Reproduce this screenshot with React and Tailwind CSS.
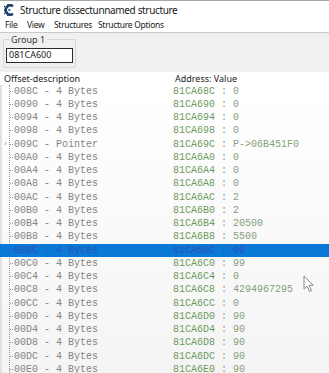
import React from "react";

const rows = [
	["008C", "4 Bytes", "0"],
	["0090", "4 Bytes", "0"],
	["0094", "4 Bytes", "0"],
	["0098", "4 Bytes", "0"],
	["009C", "Pointer", "P->06B451F0"],
	["00A0", "4 Bytes", "0"],
	["00A4", "4 Bytes", "0"],
	["00A8", "4 Bytes", "0"],
	["00AC", "4 Bytes", "2"],
	["00B0", "4 Bytes", "2"],
	["00B4", "4 Bytes", "20500"],
	["00B8", "4 Bytes", "5500"],
	["00BC", "4 Bytes", "99"],
	["00C0", "4 Bytes", "99"],
	["00C4", "4 Bytes", "0"],
	["00C8", "4 Bytes", "4294967295"],
	["00CC", "4 Bytes", "0"],
	["00D0", "4 Bytes", "90"],
	["00D4", "4 Bytes", "90"],
	["00D8", "4 Bytes", "90"],
	["00DC", "4 Bytes", "90"],
	["00E0", "4 Bytes", "90"],
];

const addr = (off) => "81CA6" + off.slice(2);

const CeIcon = () => (
	<svg width="11" height="12" viewBox="0 0 11 12">
		<path
			d="M9 2.2 A4.6 4.6 0 1 0 9 9.8"
			fill="none"
			stroke="#1d3b6e"
			strokeWidth="2.6"
		/>
		<path d="M1 3 L0 2 M0.5 6 L-0.5 6 M1 9 L0 10 M4 1 L3.6 0 M4 11 L3.6 12" stroke="#1d3b6e" strokeWidth="1.4" />
		<circle cx="5.3" cy="6" r="1.2" fill="#4a7bc2" />
	</svg>
);

const Cursor = () => (
	<svg width="12" height="18" viewBox="0 0 12 18">
		<path
			d="M1 1 L1 14 L4 11 L6.5 16.5 L8.5 15.6 L6 10.3 L10.2 10.3 Z"
			fill="#ffffff"
			stroke="#8a8a8a"
			strokeWidth="1"
			strokeLinejoin="round"
		/>
	</svg>
);

export default function App() {
	return (
		<div className="relative w-[329px] h-[373px] overflow-hidden bg-white font-['Noto_Sans',sans-serif] text-[#1a1a1a]">
			{/* title */}
			<div className="h-[19px] flex items-center gap-[5px] pl-[4px] border-t border-[#a8a8a8]">
				<CeIcon />
				<span className="text-[10px] tracking-[-0.35px]">Structure dissectunnamed structure</span>
			</div>
			{/* menu */}
			<div className="h-[14px] flex items-center text-[8.5px] tracking-[-0.3px] pl-[5px] border-b border-[#c9c9c9]">
				<span className="w-[22px]">File</span>
				<span className="w-[27px]">View</span>
				<span className="w-[44px]">Structures</span>
				<span>Structure Options</span>
			</div>
			{/* group */}
			<div className="h-[39px] bg-[#f0f0f0] pt-[1px]">
				<fieldset className="ml-[3px] w-[73px] h-[34px] border border-[#d6d6d6] rounded-[2px] px-[2px]">
					<legend className="ml-[3px] px-[2px] text-[9px] text-[#333] leading-[11px]">Group 1</legend>
					<div className="mt-[3px] w-[67px] h-[15px] border-[1.5px] border-[#2a2a2a] bg-white text-[9px] leading-[12px] pl-[2px]">
						081CA600
					</div>
				</fieldset>
			</div>
			{/* header */}
			<div className="h-[12.5px] flex items-center text-[9px] leading-[11px]">
				<span className="w-[175px] pl-[4px]">Offset-description</span>
				<span>Address: Value</span>
			</div>
			{/* rows */}
			<div className="relative bg-gradient-to-b from-white to-[#f4f4f4] h-[300px] border-l-2 border-[#e2e2e2] font-['Liberation_Mono',monospace] text-[10px]">
				<div className="absolute left-[7px] top-0 bottom-0 border-l border-dotted border-[#9a9a9a]" />
				{rows.map(([off, type, val]) => {
					const sel = off === "00BC";
					return (
						<div
							key={off}
							className={
								"relative h-[13.25px] flex items-center whitespace-pre " +
								(sel ? "bg-[#0a78d7] -ml-[2px] pl-[2px] text-[#2b54b4]" : "")
							}
						>
							{off === "009C" ? (
								<span className="absolute left-[1px] text-[8px] text-[#999] leading-none">›</span>
							) : null}
							<span className={"ml-[8px] w-[3px] border-t border-dotted " + (sel ? "border-[#2b54b4]" : "border-[#9a9a9a]")} />
							<span className={"w-[160px] pl-[1px] " + (sel ? "" : "text-[#858585]")}>
								{off} - {type}
							</span>
							<span className={sel ? "" : "text-[#6c9a5c]"}>{addr(off)}</span>
							<span className={sel ? "" : "text-[#86a07a]"}> : {val}</span>
						</div>
					);
				})}
			</div>
			<div className="absolute left-[303px] top-[275px]">
				<Cursor />
			</div>
		</div>
	);
}
